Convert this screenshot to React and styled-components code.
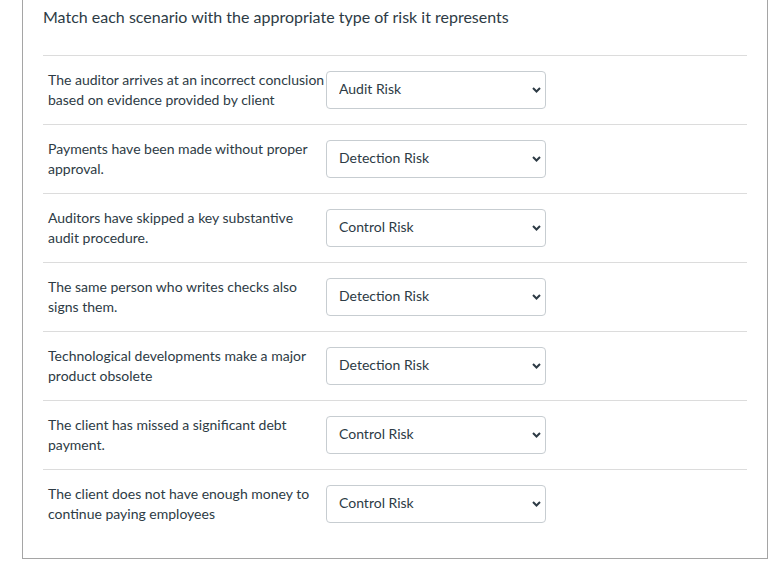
import React from "react";
import styled, { createGlobalStyle } from "styled-components";

const Global = createGlobalStyle`
  html, body { margin: 0; padding: 0; background: #fff; }
  body { font-family: Lato, "Noto Sans", sans-serif; color: #2d3b45; }
`;

const Panel = styled.div`
  box-sizing: border-box;
  margin-left: 22px;
  width: 746px;
  border: 1px solid #a5a5a5;
  border-top: none;
  padding: 5px 20px 20px 20px;
`;

const Title = styled.div`
  font-size: 16px;
  line-height: 24px;
  margin-bottom: 26px;
`;

const Row = styled.div`
  display: flex;
  align-items: center;
  border-top: 1px solid #dcdcdc;
  padding: 14px 0 14px 5px;
`;

const Label = styled.div`
  flex: none;
  width: 278px;
  font-size: 14px;
  line-height: 20px;
`;

const SelectWrap = styled.div`
  position: relative;
  flex: none;
  width: 220px;
  height: 38px;
`;

const Select = styled.select`
  box-sizing: border-box;
  appearance: none;
  -webkit-appearance: none;
  width: 100%;
  height: 100%;
  border: 1px solid #c7cdd1;
  border-radius: 4px;
  background: #fff;
  padding: 0 24px 4px 12px;
  font-family: Lato, "Noto Sans", sans-serif;
  font-size: 14px;
  color: #2d3b45;
  outline: none;
`;

const Chevron = styled.svg`
  position: absolute;
  right: 5px;
  top: 16px;
  width: 9px;
  height: 6px;
  pointer-events: none;
`;

const options = ["Audit Risk", "Detection Risk", "Control Risk", "Inherent Risk", "Business Risk"];

const rows = [
  ["The auditor arrives at an incorrect conclusion based on evidence provided by client", "Audit Risk"],
  ["Payments have been made without proper approval.", "Detection Risk"],
  ["Auditors have skipped a key substantive audit procedure.", "Control Risk"],
  ["The same person who writes checks also signs them.", "Detection Risk"],
  ["Technological developments make a major product obsolete", "Detection Risk"],
  ["The client has missed a significant debt payment.", "Control Risk"],
  ["The client does not have enough money to continue paying employees", "Control Risk"],
];

export default function App() {
  return (
    <>
      <Global />
      <Panel>
        <Title>Match each scenario with the appropriate type of risk it represents</Title>
        {rows.map(([text, value], i) => (
          <Row key={i}>
            <Label>{text}</Label>
            <SelectWrap>
              <Select defaultValue={value}>
                {options.map((o) => (
                  <option key={o} value={o}>{o}</option>
                ))}
              </Select>
              <Chevron viewBox="0 0 9 6">
                <path d="M1 1 L4.5 4.5 L8 1" fill="none" stroke="#2d3b45" strokeWidth="2" />
              </Chevron>
            </SelectWrap>
          </Row>
        ))}
      </Panel>
    </>
  );
}
